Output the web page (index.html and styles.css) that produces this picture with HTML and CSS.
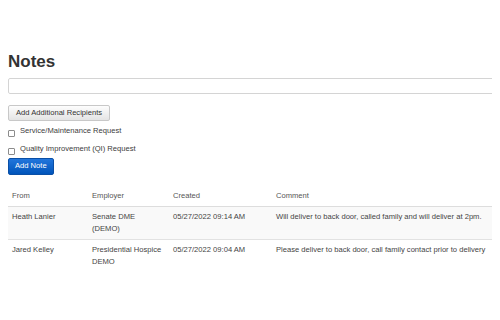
FILE: index.html
```html
<!DOCTYPE html>
<html lang="en">
<head>
    <meta charset="UTF-8">
    <title>Notes</title>
    <link rel="stylesheet" href="styles.css">
</head>
<body>
    <div class="notes">
        <h1>Notes</h1>

        <!-- NEW NOTE -->
        <form id="noteForm">
            <input type="text" class="note-input" id="noteInput">
            <button type="button" class="btn">Add Additional Recipients</button>
            <label class="check-row">
                <input type="checkbox" class="check">
                <span>Service/Maintenance Request</span>
            </label>
            <label class="check-row">
                <input type="checkbox" class="check">
                <span>Quality Improvement (QI) Request</span>
            </label>
            <button type="submit" class="btn btn-primary">Add Note</button>
        </form>

        <!-- NOTE LIST -->
        <table class="note-table">
            <thead>
                <tr>
                    <th class="col-from">From</th>
                    <th class="col-employer">Employer</th>
                    <th class="col-created">Created</th>
                    <th>Comment</th>
                </tr>
            </thead>
            <tbody>
                <tr>
                    <td>Heath Lanier</td>
                    <td class="col-employer">Senate DME (DEMO)</td>
                    <td>05/27/2022 09:14 AM</td>
                    <td>Will deliver to back door, called family and will deliver at 2pm.</td>
                </tr>
                <tr>
                    <td>Jared Kelley</td>
                    <td class="col-employer">Presidential Hospice DEMO</td>
                    <td>05/27/2022 09:04 AM</td>
                    <td>Please deliver to back door, call family contact prior to delivery</td>
                </tr>
            </tbody>
        </table>
    </div>
</body>
</html>
```

FILE: styles.css
```css
* {
    box-sizing: border-box;
}

html {
    overflow: hidden;
}

body {
    margin: 8px;
    font-family: "Liberation Sans", Arial, sans-serif;
    font-size: 7.6px;
    color: #444;
    background: #fff;
}

h1 {
    margin: 44px 0 6px;
    font-size: 17px;
    line-height: 20px;
    font-weight: bold;
    color: #333;
}

#noteForm {
    display: flex;
    flex-direction: column;
    align-items: flex-start;
}

.note-input {
    display: block;
    width: 487px;
    height: 16px;
    margin: 0 0 11px;
    border: 1px solid #d4d4d4;
    border-radius: 2px;
    background: #fff;
    outline: none;
}

.btn {
    height: 16px;
    margin: 0;
    padding: 0 7px;
    font-family: inherit;
    font-size: 7.6px;
    line-height: 14px;
    color: #333;
    background: linear-gradient(#fdfdfd, #e4e4e4);
    border: 1px solid #c8c8c8;
    border-radius: 2px;
    cursor: pointer;
}

.check-row {
    display: flex;
    align-items: flex-start;
    gap: 5px;
    height: 17.5px;
    padding-top: 2.5px;
    line-height: 12px;
    color: #3c3c3c;
}

.btn + .check-row {
    margin-top: 1.5px;
}

.check {
    appearance: none;
    -webkit-appearance: none;
    width: 7px;
    height: 7px;
    margin: 5px 0 0;
    border: 1px solid #8c8c8c;
    border-radius: 1px;
    background: #fff;
}

.btn-primary {
    height: 17px;
    padding: 0 6px;
    color: #fff;
    background: linear-gradient(#2276dc, #0054ba);
    border-color: #0a4fa6;
}

.note-table {
    width: 500px;
    margin-top: 11px;
    border-collapse: collapse;
    table-layout: fixed;
}

.note-table th,
.note-table td {
    padding: 4px 4px;
    line-height: 12px;
    text-align: left;
    vertical-align: top;
    font-weight: normal;
}

.note-table th {
    color: #555;
    border-bottom: 1px solid #ddd;
}

.note-table td {
    border-bottom: 1px solid #e2e2e2;
}

.note-table tbody tr:first-child {
    background: #f9f9f9;
}

.note-table tbody tr:last-child td {
    border-bottom: none;
}

.col-from {
    width: 80px;
}

.col-employer {
    width: 81px;
    padding-right: 6px !important;
}

.col-created {
    width: 103px;
}
```
